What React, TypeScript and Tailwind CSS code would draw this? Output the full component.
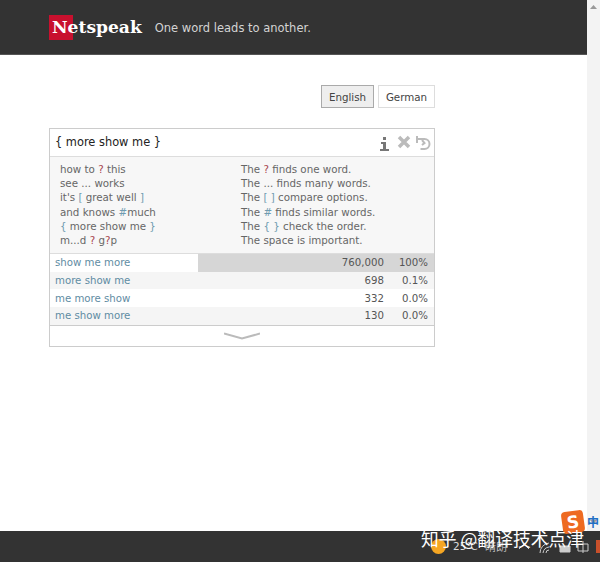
const font = { fontFamily: '"DejaVu Sans", sans-serif' };

const examples = [
  [["how to "], ["?", "r"], [" this"]],
  [["see ... works"]],
  [["it's "], ["[", "b"], [" great well "], ["]", "b"]],
  [["and knows "], ["#", "b"], ["much"]],
  [["{", "b"], [" more show me "], ["}", "b"]],
  [["m...d "], ["?", "r"], [" g"], ["?", "r"], ["p"]],
];

const hints = [
  [["The "], ["?", "r"], [" finds one word."]],
  [["The ... finds many words."]],
  [["The "], ["[ ]", "b"], [" compare options."]],
  [["The "], ["#", "b"], [" finds similar words."]],
  [["The "], ["{ }", "b"], [" check the order."]],
  [["The space is important."]],
];

const results = [
  { phrase: "show me more", count: "760,000", share: "100%", bar: 236 },
  { phrase: "more show me", count: "698", share: "0.1%", bar: 0 },
  { phrase: "me more show", count: "332", share: "0.0%", bar: 0 },
  { phrase: "me show more", count: "130", share: "0.0%", bar: 0 },
];

function Line({ parts }: { parts: string[][] }) {
  return (
    <div className="h-[14.2px] leading-[14.2px] whitespace-pre">
      {parts.map((p, i) => (
        <span
          key={i}
          className={p[1] === "r" ? "text-[#a8464f]" : p[1] === "b" ? "text-[#6f9bb0]" : ""}
        >
          {p[0]}
        </span>
      ))}
    </div>
  );
}

export default function App() {
  return (
    <div
      className="relative flex h-[562px] w-[600px] flex-col overflow-hidden bg-white text-[#555]"
      style={font}
    >
      <div className="flex min-h-0 flex-1">
        <div className="w-[587px] shrink-0">
          <header className="flex h-[55px] items-center border-b border-[#555] bg-[#333333] pl-[49px]">
            <div className="relative flex h-[25px] items-center">
              <div className="absolute left-0 top-0 h-[25px] w-[24px] bg-[#c8102e]" />
              <span
                className="relative pl-[3px] text-[17.100px] font-bold leading-[25px] text-white"
                style={{ fontFamily: '"DejaVu Serif", serif' }}
              >
                Netspeak
              </span>
            </div>
            <span className="ml-[13px] pt-[3px] text-[11.500px] text-[#d4d4d4]">
              One word leads to another.
            </span>
          </header>

          <main className="pl-[49px] pt-[30px]">
            <div className="w-[386px]">
              <div className="flex justify-end gap-[4px]">
                <button className="h-[23px] w-[53px] border border-[#aaa] bg-[#eeeeee] pt-[2px] text-[10.300px] text-[#444]">
                  English
                </button>
                <button className="h-[23px] w-[57px] border border-[#ddd] bg-white pt-[2px] text-[10.300px] text-[#444]">
                  German
                </button>
              </div>

              <div className="mt-[20px] border border-[#ccc] bg-white">
                <div className="flex h-[28px] items-center border-b border-[#ddd] pl-[5px] pr-[2px]">
                  <span className="flex-1 text-[11.400px] text-[#222]">{"{ more show me }"}</span>
                  <svg width="52" height="18" viewBox="0 0 52 18" fill="none">
                    <g fill="#777">
                      <rect x="3" y="3" width="3" height="3" />
                      <path d="M1 8h5v7h3v2H0v-2h3V10H1z" />
                    </g>
                    <path d="M19 3l10 10M29 3L19 13" stroke="#bbb" strokeWidth="3.500" />
                    <path
                      d="M37 5h7.500a5 5 0 0 1 0 10h-4M37 2v6h1M42 6l2.500 3-2.500 2"
                      stroke="#bbb"
                      strokeWidth="2"
                    />
                  </svg>
                </div>

                <div className="flex h-[97px] border-b border-[#ddd] bg-[#f7f7f7] pl-[10px] pt-[5px] text-[10.300px] text-[#666]">
                  <div className="w-[181px]">
                    {examples.map((parts, i) => (
                      <Line key={i} parts={parts} />
                    ))}
                  </div>
                  <div>
                    {hints.map((parts, i) => (
                      <Line key={i} parts={parts} />
                    ))}
                  </div>
                </div>

                <div className="border-b border-[#ccc] text-[10.200px]">
                  {results.map((r, i) => (
                    <div
                      key={r.phrase}
                      className={`relative flex h-[17.700px] items-center pl-[5px] pr-[6px] ${
                        i % 2 === 1 ? "bg-[#f5f5f5]" : "bg-white"
                      }`}
                    >
                      {r.bar > 0 && (
                        <div
                          className="absolute bottom-0 right-0 top-0 bg-[#d6d6d6]"
                          style={{ width: r.bar }}
                        />
                      )}
                      <span className="relative flex-1 text-[#5f8ca3]">{r.phrase}</span>
                      <span className="relative w-[60px] text-right text-[#555]">{r.count}</span>
                      <span className="relative w-[44px] text-right text-[#555]">{r.share}</span>
                    </div>
                  ))}
                </div>

                <div className="flex h-[20px] items-center justify-center">
                  <svg width="36" height="8" viewBox="0 0 36 8" fill="none">
                    <path d="M0 1.500L18 6.500L36 1.500" stroke="#bbb" strokeWidth="2" />
                  </svg>
                </div>
              </div>
            </div>
          </main>
        </div>

        <div className="flex w-[13px] flex-col items-center justify-between bg-[#f3f3f3] pb-[7px] pt-[5px]">
          <svg width="7" height="4" viewBox="0 0 7 4">
            <path d="M3.500 0L7 4H0z" fill="#999" />
          </svg>
          <svg width="7" height="4" viewBox="0 0 7 4">
            <path d="M3.500 4L7 0H0z" fill="#999" />
          </svg>
        </div>
      </div>

      <footer className="flex h-[31px] shrink-0 items-center whitespace-nowrap bg-[#333333] pl-[431px] text-[10.500px] text-[#ddd]">
        <span className="h-[15px] w-[15px] shrink-0 rounded-full bg-[#f5a623]" />
        <span className="ml-[7px] w-[25px] shrink-0">25℃</span>
        <span
          className="ml-[7px] w-[22px] shrink-0 text-[11px] text-[#bbb]"
          style={{ fontFamily: '"Noto Sans CJK SC", sans-serif' }}
        >
          晴朗
        </span>
        <svg
          className="ml-[11px] shrink-0"
          width="76"
          height="14"
          viewBox="0 0 76 14"
          fill="none"
          stroke="#ccc"
          strokeWidth="1"
        >
          <path d="M1 9l5-5 5 5" />
          <path d="M22 13a10 10 0 0 1 9-10M25 13a7 7 0 0 1 6-6M28 13a3 3 0 0 1 3-3" />
          <path d="M42 6h10v6H42z" fill="#ccc" />
          <path d="M60 4h10v7H60zM65 1v12" />
        </svg>
        <span className="ml-[2px] h-[13px] w-[4px] shrink-0 bg-[#c9502b]" />
      </footer>

      <div className="absolute left-[562px] top-[511px] flex h-[22px] w-[22px] rotate-[-8deg] items-center justify-center rounded-[4px] bg-[#ee6a21] text-[17px] font-bold leading-none text-white">
        S
      </div>
      <div
        className="absolute left-[587px] top-[514px] text-[12px] font-bold leading-[16px] text-[#1f6fc4]"
        style={{ fontFamily: '"Noto Sans CJK SC", sans-serif' }}
      >
        中
      </div>
      <div
        className="absolute left-[421px] top-[525px] whitespace-nowrap text-[17.800px] leading-[26px] text-white"
        style={{ fontFamily: '"Noto Sans CJK SC", sans-serif' }}
      >
        知乎 @翻译技术点津
      </div>
    </div>
  );
}
